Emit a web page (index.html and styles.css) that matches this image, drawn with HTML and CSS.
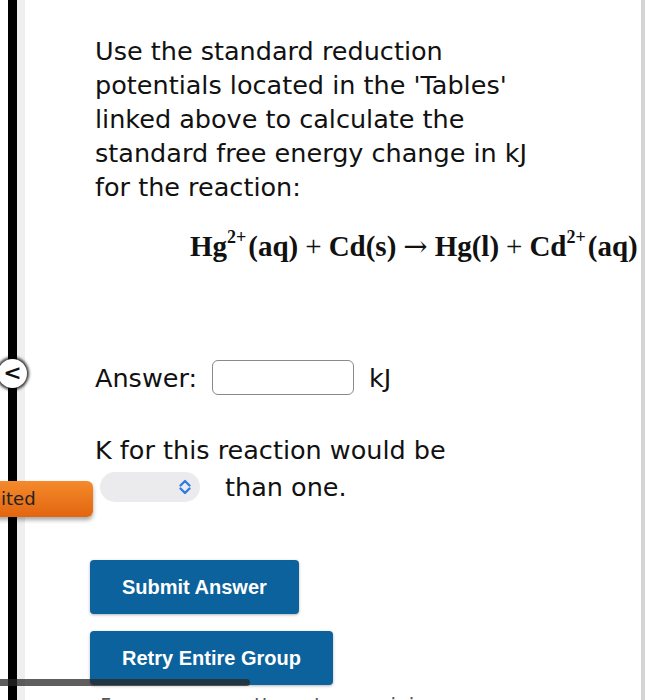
FILE: index.html
```html
<!DOCTYPE html>
<html lang="en">
<head>
    <meta charset="UTF-8">
    <meta name="viewport" content="width=device-width, initial-scale=1.0">
    <title>Question</title>
    <link rel="stylesheet" href="styles.css">
</head>
<body>
    <div id="shell">
        <div class="gap"></div>
        <div class="rail"></div>
        <div class="shade"></div>
        <div id="main">
            <p class="prompt">Use the standard reduction potentials located in the 'Tables' linked above to calculate the standard free energy change in kJ for the reaction:</p>
            <div class="equation">Hg<sup>2+</sup>(aq)<span class="op">+</span>Cd(s)<span class="arrow">&rarr;</span>Hg(l)<span class="op">+</span>Cd<sup>2+</sup>(aq)</div>

            <div class="answer">
                <span>Answer:</span>
                <input type="text" class="box">
                <span>kJ</span>
            </div>

            <p class="kline">K for this reaction would be</p>
            <div class="choose">
                <div class="select">
                    <svg width="14" height="18" viewBox="0 0 14 18"><path d="M2.5 7.5 L7 3 L11.5 7.5 M2.5 10.5 L7 15 L11.5 10.5" fill="none" stroke="#2f7be0" stroke-width="2.4" stroke-linecap="round" stroke-linejoin="round"/></svg>
                </div>
                <span>than one.</span>
            </div>

            <div class="buttons">
                <button class="btn">Submit Answer</button>
                <button class="btn">Retry Entire Group</button>
            </div>
            <p class="remain">5 more group attempts remaining</p>
        </div>
        <div class="edge"></div>
    </div>

    <div class="back">&lt;</div>
    <div class="tab">ited</div>
    <div class="scroll"></div>
</body>
</html>
```

FILE: styles.css
```css
body {
    margin: 0;
    background-color: #fff;
    font-family: 'DejaVu Sans', Verdana, sans-serif;
    color: #111;
    height: 700px;
    overflow: hidden;
}

#shell {
    display: flex;
    height: 700px;
}

.gap {
    width: 8px;
    flex-shrink: 0;
}

.rail {
    width: 9px;
    flex-shrink: 0;
    background-color: #000;
}

.shade {
    width: 8px;
    flex-shrink: 0;
    background-color: #efefef;
}

.edge {
    width: 4px;
    flex-shrink: 0;
    background-color: #d4d4d4;
    margin-right: 6px;
}

#main {
    flex: 1;
    min-width: 0;
    padding-left: 70px;
    padding-top: 34px;
    font-size: 25.5px;
}

.prompt {
    margin: 0;
    line-height: 34px;
    width: 450px;
}

.equation {
    font-family: 'Liberation Serif', 'DejaVu Serif', serif;
    font-weight: bold;
    font-size: 29px;
    line-height: 36px;
    margin: 24px 0 0 95px;
    white-space: nowrap;
}

.equation sup {
    font-size: 18px;
    vertical-align: 13px;
    line-height: 0;
    margin-right: 2px;
}

.equation .op {
    font-weight: normal;
    margin: 0 7px;
}

.equation .arrow {
    font-family: 'DejaVu Serif', serif;
    font-weight: normal;
    margin: 0 7px;
}

.answer {
    display: flex;
    align-items: center;
    gap: 15px;
    margin-top: 96px;
}

.box {
    width: 140px;
    height: 33px;
    border: 1.5px solid #8a8a8a;
    border-radius: 6px;
    padding: 0;
    margin: 0;
}

.kline {
    margin: 38px 0 0 0;
    line-height: 34px;
}

.choose {
    display: flex;
    align-items: center;
    gap: 25px;
    margin-top: 5px;
    margin-left: 5px;
}

.select {
    width: 100px;
    height: 30px;
    background-color: #ebebed;
    border-radius: 15px;
    display: flex;
    align-items: center;
    justify-content: flex-end;
    padding-right: 8px;
    box-sizing: border-box;
}

.buttons {
    display: flex;
    flex-direction: column;
    align-items: flex-start;
    gap: 17px;
    margin-top: 58px;
    margin-left: -5px;
}

.btn {
    background-color: #0b629c;
    color: #fff;
    border: none;
    border-radius: 4px;
    height: 54px;
    padding: 0 32px;
    font-family: 'Liberation Sans', Arial, sans-serif;
    font-weight: bold;
    font-size: 20px;
    box-shadow: 0 1px 3px rgba(0, 0, 0, 0.3);
}

.remain {
    margin: 8px 0 0 5px;
    font-size: 20px;
    line-height: 24px;
    color: #555;
}

.back {
    position: absolute;
    left: -2px;
    top: 359px;
    width: 29px;
    height: 29px;
    border-radius: 50%;
    background-color: #fff;
    box-shadow: 0 0 3px 2px rgba(0, 0, 0, 0.8);
    font-family: 'DejaVu Sans', sans-serif;
    font-weight: bold;
    font-size: 22px;
    line-height: 28px;
    text-align: center;
}

.tab {
    position: absolute;
    left: -20px;
    top: 481px;
    width: 113px;
    height: 36px;
    border-radius: 6px;
    background: linear-gradient(#f58a2c, #e2650f);
    box-shadow: 0 3px 4px rgba(0, 0, 0, 0.35);
    font-family: 'DejaVu Sans', sans-serif;
    font-size: 18px;
    line-height: 36px;
    padding-left: 21px;
    box-sizing: border-box;
    color: #222;
}

.scroll {
    position: absolute;
    left: 0;
    top: 679px;
    width: 250px;
    height: 7px;
    border-radius: 0 4px 4px 0;
    background-color: rgba(40, 40, 40, 0.75);
}
```
